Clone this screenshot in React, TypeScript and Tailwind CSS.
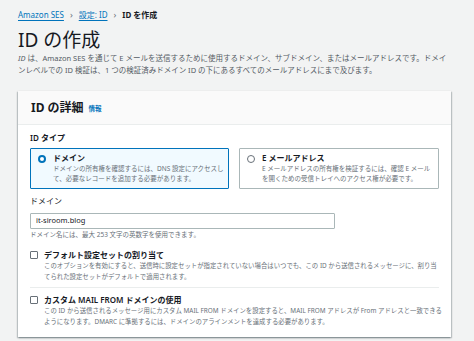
import React from "react";

const font = { fontFamily: '"Noto Sans", "Noto Sans CJK JP", sans-serif' };

export default function App() {
  return (
    <div className="w-[474px] h-[341px] overflow-hidden bg-[#f2f3f3] text-[#16191f]" style={font}>
      <div className="pl-[18px] pr-[23px] pt-[9px]">
        {/* Breadcrumb */}
        <div className="flex items-center gap-[6px] text-[8px] leading-[12px] h-[12px]">
          <span className="text-[#0073bb] underline decoration-[#0073bb] underline-offset-2">Amazon SES</span>
          <span className="text-[#687078] text-[9px]">›</span>
          <span className="text-[#0073bb] underline decoration-[#0073bb] underline-offset-2">設定: ID</span>
          <span className="text-[#687078] text-[9px]">›</span>
          <span className="font-bold">ID を作成</span>
        </div>
        {/* Title */}
        <h1 className="mt-[7px] text-[19px] leading-[24px] font-normal">ID の作成</h1>
        <p className="text-[7.5px] leading-[12px] text-[#545b64] whitespace-nowrap">
          <i>ID</i> は、Amazon SES を通じて E メールを送信するために使用するドメイン、サブドメイン、またはメールアドレスです。ドメイ
          <br />
          ンレベルでの ID 検証は、1 つの検証済みドメイン ID の下にあるすべてのメールアドレスにまで及びます。
        </p>
        {/* Card */}
        <div className="mt-[15px] w-[433px] bg-white shadow-[0_1px_2px_rgba(0,28,36,0.3),1px_1px_1px_rgba(0,28,36,0.15),-1px_1px_1px_rgba(0,28,36,0.15)]">
          <div className="h-[34px] bg-[#fafafa] border-b border-[#eaeded] flex items-center px-[13px] gap-[5px]">
            <span className="text-[12px] font-bold leading-none">ID の詳細</span>
            <span className="text-[6.5px] font-bold text-[#0073bb] mt-[2px]">情報</span>
          </div>
          <div className="px-[12px] pt-[7px]">
            <div className="text-[8px] font-semibold leading-[12px]">ID タイプ</div>
            <div className="mt-[4px] flex gap-[10px]">
              <div className="w-[200px] h-[41px] border border-[#0073bb] bg-[#f1faff] rounded-[1px] flex px-[7px] pt-[4px] gap-[7px] overflow-hidden">
                <div className="mt-[2px] w-[8px] h-[8px] rounded-full border-[2.5px] border-[#0073bb] bg-white shrink-0" />
                <div className="leading-[10.5px] whitespace-nowrap">
                  <div className="text-[8px] font-semibold">ドメイン</div>
                  <div className="text-[6.5px] text-[#687078]">ドメインの所有権を確認するには、DNS 設定にアクセスし</div>
                  <div className="text-[6.5px] text-[#687078]">て、必要なレコードを追加する必要があります。</div>
                </div>
              </div>
              <div className="w-[201px] h-[41px] border border-[#aab7b8] bg-white rounded-[1px] flex px-[7px] pt-[4px] gap-[7px] overflow-hidden">
                <div className="mt-[2px] w-[8px] h-[8px] rounded-full border border-[#687078] bg-white shrink-0" />
                <div className="leading-[10.5px] whitespace-nowrap">
                  <div className="text-[8px] font-semibold">E メールアドレス</div>
                  <div className="text-[6.5px] text-[#687078]">E メールアドレスの所有権を検証するには、確認 E メール</div>
                  <div className="text-[6.5px] text-[#687078]">を開くための受信トレイへのアクセス権が必要です。</div>
                </div>
              </div>
            </div>
            <div className="mt-[6px] text-[8px] leading-[12px]">ドメイン</div>
            <div className="mt-[6px] w-[305px] h-[16px] border border-[#aab7b8] rounded-[1px] flex items-center px-[5px] text-[7.5px]">
              it-siroom.blog
            </div>
            <div className="mt-[1px] text-[6.5px] leading-[10px] text-[#687078]">ドメイン名には、最大 253 文字の英数字を使用できます。</div>
            <div className="mt-[9px] flex gap-[6px] pb-[5px] border-b border-[#eaeded]">
              <div className="mt-[2px] w-[8px] h-[8px] border border-[#687078] rounded-[1px] shrink-0" />
              <div className="leading-[11px]">
                <div className="text-[8px] font-semibold">デフォルト設定セットの割り当て</div>
                <div className="text-[6.4px] text-[#687078] whitespace-nowrap">このオプションを有効にすると、送信時に設定セットが指定されていない場合はいつでも、この ID から送信されるメッセージに、割り当</div>
                <div className="text-[6.4px] text-[#687078]">てられた設定セットがデフォルトで適用されます。</div>
              </div>
            </div>
            <div className="mt-[6px] flex gap-[6px] pb-[10px]">
              <div className="mt-[2px] w-[8px] h-[8px] border border-[#687078] rounded-[1px] shrink-0" />
              <div className="leading-[11px]">
                <div className="text-[8px] font-semibold">カスタム MAIL FROM ドメインの使用</div>
                <div className="text-[6.4px] text-[#687078] whitespace-nowrap">この ID から送信されるメッセージ用にカスタム MAIL FROM ドメインを設定すると、MAIL FROM アドレスが From アドレスと一致できる</div>
                <div className="text-[6.4px] text-[#687078]">ようになります。DMARC に準拠するには、ドメインのアラインメントを達成する必要があります。</div>
              </div>
            </div>
          </div>
        </div>
      </div>
    </div>
  );
}
